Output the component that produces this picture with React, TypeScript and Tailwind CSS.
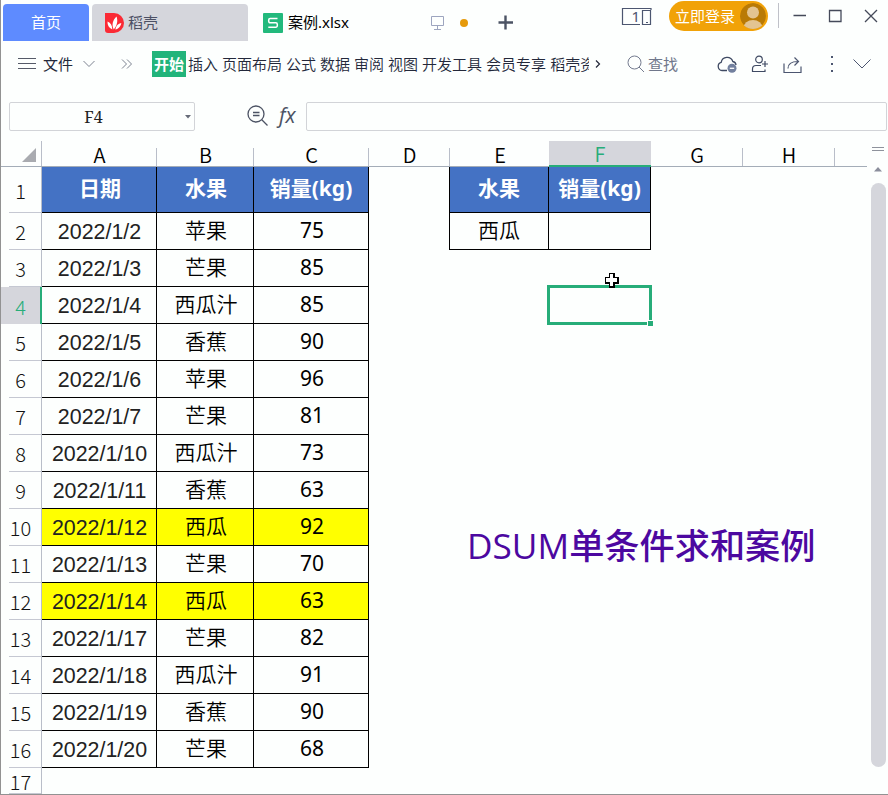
import React from 'react';
import clsx from 'clsx';

const rows = [
  ['2022/1/2', '苹果', 75],
  ['2022/1/3', '芒果', 85],
  ['2022/1/4', '西瓜汁', 85],
  ['2022/1/5', '香蕉', 90],
  ['2022/1/6', '苹果', 96],
  ['2022/1/7', '芒果', 81],
  ['2022/1/10', '西瓜汁', 73],
  ['2022/1/11', '香蕉', 63],
  ['2022/1/12', '西瓜', 92],
  ['2022/1/13', '芒果', 70],
  ['2022/1/14', '西瓜', 63],
  ['2022/1/17', '芒果', 82],
  ['2022/1/18', '西瓜汁', 91],
  ['2022/1/19', '香蕉', 90],
  ['2022/1/20', '芒果', 68],
];

const menus = ['插入', '页面布局', '公式', '数据', '审阅', '视图', '开发工具', '会员专享'];

const columns = [
  { name: 'A', width: 'w-[115px]' },
  { name: 'B', width: 'w-[97px]' },
  { name: 'C', width: 'w-[115px]' },
  { name: 'D', width: 'w-[81px]' },
  { name: 'E', width: 'w-[99px]' },
  { name: 'F', width: 'w-[102px]' },
  { name: 'G', width: 'w-[92px]' },
  { name: 'H', width: 'w-[92px]' },
];

const TabBar = () => (
  <div className="flex h-[41px] pl-[2px]">
    <div className="mt-1 flex w-[86px] items-center justify-center rounded-t bg-[#5e8bff] text-[15px] text-white">
      首页
    </div>
    <div className="mt-1 ml-[3px] flex w-[156px] items-center rounded-t-sm bg-[#d5d6dc] pl-[13px] text-[15px] text-[#4c5064]">
      <svg width="19" height="20" viewBox="0 0 19 20" className="mr-1">
        <path d="M0 0h9a10 10 0 0 1 0 20H3a3 3 0 0 1-3-3z" fill="#fb2a35" />
        <path d="M8.800 16.500C6.500 12 7.500 7.500 11.500 3.500c1.500 4 1 8.500-2.700 13zM7.300 16.500C3.800 15 2.300 12 2.500 8.500c3.300 1.500 4.800 4 4.800 8zM10.300 16.500c.7-3.800 2.700-5.800 6-6.500-.4 3.300-2.700 6-6 6.500z" fill="#fff" />
      </svg>
      稻壳
    </div>
    <div className="mt-1 flex w-[235px] items-center pl-[15px] text-[15px] text-black">
      <svg width="20" height="20" viewBox="0 0 20 20" className="mr-[5px]">
        <rect width="20" height="20" rx="1" fill="#22b97c" />
        <path d="M14.500 5.500H7.200a1.500 1.500 0 0 0-1.500 1.500v1.300a1.500 1.500 0 0 0 1.500 1.500h5.600a1.500 1.500 0 0 1 1.500 1.500v1.400a1.500 1.500 0 0 1-1.500 1.500H5.300" fill="none" stroke="#fff" strokeWidth="1.500" />
      </svg>
      <span className="w-[142px] whitespace-nowrap">案例.xlsx</span>
      <svg width="15" height="14" viewBox="0 0 15 14" fill="none" stroke="#9da5bf" className="shrink-0">
        <path d="M1.500.5h12v9h-12zM7.500 9.500v4M4 13.500h7" />
      </svg>
      <span className="ml-[15px] size-2 shrink-0 rounded-full bg-[#e69a0b]" />
    </div>
    <svg width="16" height="16" viewBox="0 0 16 16" className="mt-[15px] ml-[15px] shrink-0">
      <path d="M7.500.5v14M.5 7.500h14.500" stroke="#4b5364" strokeWidth="2.400" />
    </svg>
    <svg width="31" height="19" viewBox="0 0 31 19" fill="none" stroke="#4c5670" strokeWidth="1.200" className="mt-[7px] ml-[107px] shrink-0">
      <path d="M19 17.500H1.500v-16h28.500V3" />
      <path d="M21.500 3.500h8v14h-8zM25 15.500h2" />
      <text x="10.500" y="15" fontSize="15" fill="#4c5670" stroke="none">1</text>
    </svg>
    <div className="mt-px ml-[17px] flex h-[30px] w-[99px] shrink-0 items-center rounded-full bg-[#f1a208] pl-[6px] text-[15px] text-white">
      <span className="w-[65px] whitespace-nowrap">立即登录</span>
      <svg width="26" height="26" viewBox="0 0 26 26">
        <clipPath id="avatar"><circle cx="13" cy="13" r="13" /></clipPath>
        <g clipPath="url(#avatar)">
          <circle cx="13" cy="13" r="13" fill="#b97a05" />
          <circle cx="13" cy="9.500" r="6" fill="#e3c491" />
          <ellipse cx="13" cy="25" rx="9.500" ry="8" fill="#e3c491" />
        </g>
      </svg>
    </div>
    <div className="mt-[3px] ml-[10px] h-[25px] w-px shrink-0 bg-[#bfc1c8]" />
    <svg width="88" height="16" viewBox="0 0 88 16" fill="none" stroke="#454a5a" strokeWidth="1.300" className="mt-2 ml-[13px] shrink-0">
      <path d="M1.500 7.500h12.500M37.500 2.500h11.500v11H37.500zM73 2l12 12M85 2 73 14" />
    </svg>
  </div>
);

const MenuBar = () => (
  <div className="flex h-[46px] items-center pl-[17px] text-[15px] text-[#23283a]">
    <svg width="18" height="14" viewBox="0 0 18 14" stroke="#555a68" strokeWidth="1.200" className="shrink-0">
      <path d="M0 1.500h18M0 6.500h18M0 11.500h18" />
    </svg>
    <span className="ml-[7px] w-[40px] shrink-0">文件</span>
    <svg width="12" height="8" viewBox="0 0 12 8" fill="none" stroke="#7d8290" className="shrink-0">
      <path d="m.5 1 5.500 5.500L11.500 1" />
    </svg>
    <svg width="12" height="10" viewBox="0 0 12 10" fill="none" stroke="#7d8290" className="ml-[26px] shrink-0">
      <path d="m1 .5 4.500 4.500L1 9.500M6 .5l4.500 4.500L6 9.500" />
    </svg>
    <span className="ml-[19px] flex h-[26px] w-[34px] shrink-0 items-center justify-center bg-[#22b47b] font-bold text-white">
      开始
    </span>
    <div className="ml-[2px] flex w-[401px] shrink-0 gap-[4px] overflow-hidden font-[350] whitespace-nowrap">
      {menus.map((menu) => (
        <span key={menu}>{menu}</span>
      ))}
      <span>稻壳资</span>
    </div>
    <svg width="6" height="8" viewBox="0 0 6 8" fill="none" stroke="#23283a" strokeWidth="1.200" className="ml-[6px] shrink-0">
      <path d="m1 .5 3.500 3.500L1 7.500" />
    </svg>
    <svg width="18" height="18" viewBox="0 0 18 18" fill="none" stroke="#747b8f" className="ml-[26px] shrink-0">
      <circle cx="7.500" cy="7.500" r="6.500" />
      <path d="m12 12 5 5" />
    </svg>
    <span className="ml-[3px] w-[69px] shrink-0 text-[#70778b]">查找</span>
    <svg width="21" height="18" viewBox="0 0 21 18" fill="none" stroke="#3f4a63" strokeWidth="1.300" className="shrink-0">
      <path d="M10 15.500H5A4.200 4.200 0 0 1 4.200 7.300 6 6 0 0 1 15.800 6.500 4 4 0 0 1 19 10" />
      <circle cx="15" cy="13.300" r="4.500" fill="#72809e" stroke="none" />
      <path d="M12.800 13.300h4.400" stroke="#fff" />
    </svg>
    <svg width="18" height="18" viewBox="0 0 18 18" fill="none" stroke="#3f4a63" strokeWidth="1.200" className="ml-[13px] shrink-0">
      <circle cx="8" cy="4.500" r="3.300" />
      <path d="M10 10.500H5a3.500 3.500 0 0 0-3.500 3.500v2.500h12.500v-2M11 9h6M14 6v6" />
    </svg>
    <svg width="19" height="18" viewBox="0 0 19 18" fill="none" stroke="#4c5670" strokeWidth="1.200" className="mt-px ml-[14px] shrink-0">
      <path d="M1 7.500v9h17v-6M5 12.500C5 7 9 5.500 15 5.500M11.500 1.500l4 4-4 4" />
    </svg>
    <svg width="4" height="16" viewBox="0 0 4 16" fill="#4c5670" className="ml-[28px] shrink-0">
      <path d="M1 0h2v2H1zM1 7h2v2H1zM1 14h2v2H1z" />
    </svg>
    <svg width="18" height="10" viewBox="0 0 18 10" fill="none" stroke="#4c5670" className="ml-[19px] shrink-0">
      <path d="m.5.500 8.500 8.500L17.500.500" />
    </svg>
  </div>
);

const FormulaBar = () => (
  <div className="mt-[15px] flex h-[29px] pl-2">
    <div className="flex w-[186px] items-center rounded-xs border border-[#d2d4d8]">
      <span className="flex-1 pr-2 text-center font-['Noto_Serif','Liberation_Serif',serif] text-[16px] text-[#222]">F4</span>
      <svg width="6" height="4" viewBox="0 0 6 4" className="mr-[3px]">
        <path d="M0 0h6L3 3.500z" fill="#666b78" />
      </svg>
    </div>
    <svg width="22" height="22" viewBox="0 0 22 22" fill="none" stroke="#4c5364" strokeWidth="1.300" className="mt-[3px] ml-[52px]">
      <circle cx="9" cy="9" r="8" />
      <path d="m14.800 14.800 5.700 5.700M6 7.500h6.500M6 10.500h6.500" />
    </svg>
    <span className="ml-[10px] w-[27px] font-['Open_Sans',sans-serif] text-[21px] leading-[27px] text-[#4c5364] italic">fx</span>
    <div className="w-[581px] rounded-xs border border-[#d2d4d8]" />
  </div>
);

const ColumnHeaders = () => (
  <div className="flex h-[26px] border-b border-[#a4adb8]">
    <div className="flex w-[41px] items-end justify-end border-r border-[#b9bec9] pr-[5px] pb-1">
      <svg width="14" height="14" viewBox="0 0 14 14">
        <path d="M14 0v14H0z" fill="#a9abb0" />
      </svg>
    </div>
    {columns.map(({ name, width }) => (
      <div key={name} className={clsx('flex items-end', width, name === 'F' && 'h-[26px] border-b-2 border-[#27ad79] bg-[#d5d6dc]')}>
        <span className={clsx("flex-1 text-center font-['Noto_Sans_CJK_SC',sans-serif] text-[20px] leading-[22px] font-[350]", name === 'F' ? 'text-[#27ad79]' : 'pl-px text-black')}>
          {name}
        </span>
        {name !== 'F' && name !== 'E' && <span className="h-[18px] w-px bg-[#b9bec9]" />}
      </div>
    ))}
  </div>
);

const RowHeader = ({ row }: { row: number }) => (
  <div
    className={clsx(
      "flex w-[41px] shrink-0 items-center font-['Noto_Sans_CJK_SC',sans-serif] text-[20px] leading-[26px] font-light",
      row === 4 ? 'border-r-2 border-[#27ad79] bg-[#d5d6dc] text-[#27ad79]' : 'border-r border-[#b9bec9] text-[#111]',
    )}
  >
    <div
      className={clsx(
        'flex h-full w-full items-center justify-center pt-[2px]',
        row === 4 ? 'pr-0' : 'ml-2 border-b border-[#c5c8d2] pr-[9px]',
      )}
    >
      {row}
    </div>
  </div>
);

const HeadCell = ({ className, children }: { className: string; children: React.ReactNode }) => (
  <div className={clsx('flex items-center justify-center border-r border-b border-black bg-[#4472c4] pb-px text-[21px] font-bold text-white', className)}>
    {children}
  </div>
);

const Sheet = () => (
  <div className="relative w-[866px]">
    <div className="flex h-[46px]">
      <RowHeader row={1} />
      <HeadCell className="w-[115px] pl-[2px]">日期</HeadCell>
      <HeadCell className="w-[97px] pl-[2px]">水果</HeadCell>
      <HeadCell className="w-[115px]">销量(kg)</HeadCell>
      <div className="w-[81px] border-r border-black" />
      <HeadCell className="w-[99px]">水果</HeadCell>
      <HeadCell className="w-[102px]">销量(kg)</HeadCell>
    </div>
    {rows.map(([date, fruit, amount], i) => {
      const cell = clsx(
        'flex items-center justify-center border-r border-b border-black',
        (i === 8 || i === 10) && 'bg-[#ffff00]',
      );
      return (
        <div key={i} className="flex h-[37px]">
          <RowHeader row={i + 2} />
          <div className={clsx(cell, "w-[115px] pt-[2px] pl-px font-['Liberation_Sans',sans-serif] text-[21.400px] text-[#222]")}>{date}</div>
          <div className={clsx(cell, 'w-[97px] pl-[2px] text-[21px] font-[350]')}>{fruit}</div>
          <div className={clsx(cell, "w-[115px] pl-[2px] font-['Noto_Sans',sans-serif] text-[21px]")}>{amount}</div>
          {i === 0 && (
            <>
              <div className="w-[81px] border-r border-black" />
              <div className="flex w-[99px] items-center justify-center border-r border-b border-black text-[21px] font-[350]">西瓜</div>
              <div className="w-[102px] border-r border-b border-black" />
            </>
          )}
        </div>
      );
    })}
    <div className="flex h-[26px]">
      <RowHeader row={17} />
    </div>

    {/* Selected cell */}
    <div className="absolute top-[118px] left-[546px] h-[40px] w-[105px] border-3 border-[#27ad79]">
      <span className="absolute -right-[5px] -bottom-[5px] size-[7px] border border-white bg-[#27ad79]" />
    </div>
    <svg width="16" height="16" viewBox="0 0 16 16" className="absolute top-[106px] left-[603px]" shapeRendering="crispEdges">
      <path d="M5 0h6v4h4v7h-4v4H5v-4H1V4h4z" fill="#000" />
      <path d="M6 1h3v4h4v4H9v4H6V9H2V5h4z" fill="#fff" />
    </svg>

    {/* Floating caption */}
    <div className="absolute top-[351px] left-[466px] font-['Open_Sans','Noto_Sans_CJK_SC',sans-serif] text-[35.200px] leading-[54px] whitespace-nowrap text-[#4c08a0]">
      DSUM<span className="font-medium">单条件求和案例</span>
    </div>
  </div>
);

const ScrollBar = () => (
  <div className="flex flex-1 flex-col items-center pl-px">
    <div className="mt-[6px] h-[4px] w-3 border-y border-[#8e929c]" />
    <svg width="8" height="5" viewBox="0 0 8 5" className="mt-[16px]">
      <path d="M4 0l4 4.500H0z" fill="#8b8e9c" />
    </svg>
    <div className="mt-[11px] h-[584px] w-[15px] rounded-full bg-[#d5d6dc]" />
  </div>
);

const App = () => {
  return (
    <div className="h-[795px] w-[888px] overflow-hidden border-b border-l border-[#929292] bg-[#fdfffe] font-['Noto_Sans','Noto_Sans_CJK_SC',sans-serif] text-black">
      <TabBar />
      <MenuBar />
      <FormulaBar />
      <div className="mt-[10px] flex">
        <div className="w-[866px] shrink-0">
          <ColumnHeaders />
          <Sheet />
        </div>
        <ScrollBar />
      </div>
    </div>
  );
};

export default App;
